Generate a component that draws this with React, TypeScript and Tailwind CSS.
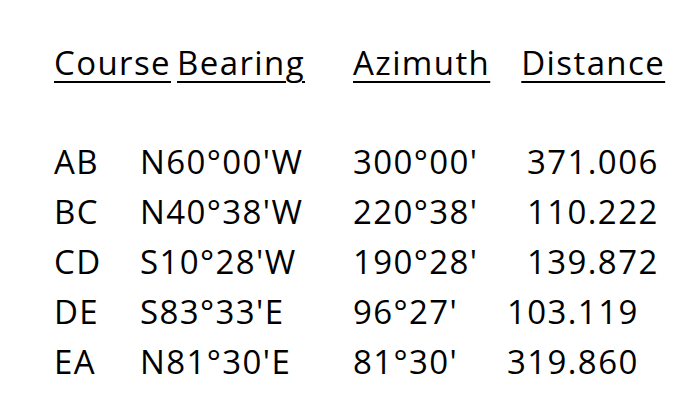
const rows = [
  { course: "AB", bearing: "N60°00'W", azimuth: "300°00'", distance: "371.006", shift: false },
  { course: "BC", bearing: "N40°38'W", azimuth: "220°38'", distance: "110.222", shift: false },
  { course: "CD", bearing: "S10°28'W", azimuth: "190°28'", distance: "139.872", shift: false },
  { course: "DE", bearing: "S83°33'E", azimuth: "96°27'", distance: "103.119", shift: true },
  { course: "EA", bearing: "N81°30'E", azimuth: "81°30'", distance: "319.860", shift: true },
]

export default function App() {
  return (
    <div className="h-[417px] w-[698px] bg-white pl-[54px] pt-[38px] font-['Open_Sans',sans-serif] text-[33px] leading-[50px] tracking-[1.4px] text-black">
      {/* header */}
      <div className="flex">
        <span className="underline decoration-2 underline-offset-[6px]">Course</span>
        <span className="ml-[6px] underline decoration-2 underline-offset-[6px]">Bearing</span>
        <span className="ml-[48px] underline decoration-2 underline-offset-[6px]">Azimuth</span>
        <span className="ml-[31px] underline decoration-2 underline-offset-[6px]">Distance</span>
      </div>

      {/* data */}
      <div className="mt-[49px]">
        {rows.map((r) => (
          <div key={r.course} className="grid grid-cols-[86px_213px_174px_auto]">
            <span>{r.course}</span>
            <span>{r.bearing}</span>
            <span>{r.azimuth}</span>
            <span className={r.shift ? "-ml-[20px]" : ""}>{r.distance}</span>
          </div>
        ))}
      </div>
    </div>
  )
}
